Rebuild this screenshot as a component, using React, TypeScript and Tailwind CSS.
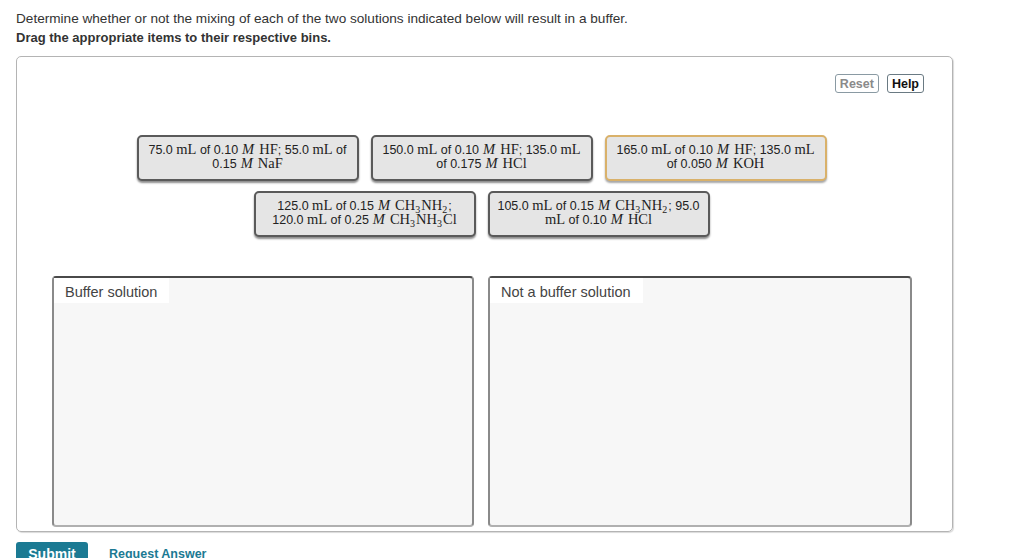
import React from "react";

const sans = { fontFamily: '"Liberation Sans", Arial, sans-serif' };
const serif = { fontFamily: '"Liberation Serif", "Times New Roman", serif' };

// upright math roman (units, formulas)
function S({ children }: { children: React.ReactNode }) {
  return <span style={serif} className="text-[14.5px]">{children}</span>;
}
// italic molarity symbol with math spacing on each side
function M() {
  return (
    <span style={serif} className="italic text-[14.5px] ml-[4px] mr-[5px]">
      M
    </span>
  );
}
function Sub({ n }: { n: string }) {
  return (
    <span className="text-[10px] leading-none relative top-[3px] mr-[1px]">{n}</span>
  );
}

type CardProps = { children: React.ReactNode; active?: boolean };
function Card({ children, active }: CardProps) {
  return (
    <div
      style={sans}
      className={
        "w-[222px] h-[46px] rounded-[5px] bg-[#e5e5e5] flex flex-col items-center justify-center pb-[2px] text-center text-[12.5px] leading-[13px] text-[#222] whitespace-nowrap " +
        (active
          ? "border-2 border-[#d9b16a] shadow-[0_2px_2px_rgba(0,0,0,0.35)]"
          : "border-2 border-[#5a5a5a] shadow-[0_2px_2px_rgba(0,0,0,0.45)]")
      }
    >
      {children}
    </div>
  );
}

function Bin({ label, width }: { label: string; width: string }) {
  return (
    <div
      className={
        width +
        " h-[251px] rounded-[4px] border-2 border-t-[#4a4a4a] border-x-[#8a8a8a] border-b-[#b0b0b0] bg-[#f7f7f7]"
      }
    >
      <div className="inline-block bg-white pl-[11px] pr-[12px] pt-[6px] pb-[3px] text-[14.5px] text-[#444] leading-[16px]">
        {label}
      </div>
    </div>
  );
}

export default function App() {
  return (
    <div style={sans} className="w-[1024px] h-[558px] overflow-hidden bg-white text-[#333]">
      <div className="pl-[16px] pt-[11px]">
        <p className="text-[13.6px] leading-[15px] text-[#333]">
          Determine whether or not the mixing of each of the two solutions indicated below will result in a buffer.
        </p>
        <p className="mt-[4px] text-[13px] leading-[15px] font-bold text-[#333]">
          Drag the appropriate items to their respective bins.
        </p>
      </div>

      <div className="ml-[16px] mt-[11px] w-[937px] h-[476px] rounded-[5px] border border-[#b4b4b4] shadow-[1px_1px_1px_rgba(0,0,0,0.15)]">
        <div className="flex justify-end gap-[8px] pr-[28px] pt-[17px]">
          <button className="h-[19px] px-[4px] rounded-[3px] border border-[#8a9aa3] bg-white text-[12.5px] font-bold text-[#8a8a8a] leading-[16px]">
            Reset
          </button>
          <button className="h-[19px] px-[4px] rounded-[3px] border border-[#6a7a83] bg-white text-[12.5px] font-bold text-[#111] leading-[16px]">
            Help
          </button>
        </div>

        <div className="mt-[42px] flex justify-center gap-[12px] pr-[6px]">
          <Card>
            <div>
              75.0 <S>mL</S> of 0.10<M /><S>HF</S>; 55.0 <S>mL</S> of
            </div>
            <div>
              0.15<M /><S>NaF</S>
            </div>
          </Card>
          <Card>
            <div>
              150.0 <S>mL</S> of 0.10<M /><S>HF</S>; 135.0 <S>mL</S>
            </div>
            <div>
              of 0.175<M /><S>HCl</S>
            </div>
          </Card>
          <Card active>
            <div>
              165.0 <S>mL</S> of 0.10<M /><S>HF</S>; 135.0 <S>mL</S>
            </div>
            <div>
              of 0.050<M /><S>KOH</S>
            </div>
          </Card>
        </div>

        <div className="mt-[10px] flex justify-center gap-[12px] pr-[6px]">
          <Card>
            <div>
              125.0 <S>mL</S> of 0.15<M />
              <S>
                CH<Sub n="3" />NH<Sub n="2" />
              </S>
              ;
            </div>
            <div>
              120.0 <S>mL</S> of 0.25<M />
              <S>
                CH<Sub n="3" />NH<Sub n="3" />Cl
              </S>
            </div>
          </Card>
          <Card>
            <div>
              105.0 <S>mL</S> of 0.15<M />
              <S>
                CH<Sub n="3" />NH<Sub n="2" />
              </S>
              ; 95.0
            </div>
            <div>
              <S>mL</S> of 0.10<M /><S>HCl</S>
            </div>
          </Card>
        </div>

        <div className="mt-[39px] flex gap-[14px] pl-[35px]">
          <Bin label="Buffer solution" width="w-[422px]" />
          <Bin label="Not a buffer solution" width="w-[424px]" />
        </div>
      </div>

      <div className="ml-[16px] mt-[10px] flex items-start gap-[21px]">
        <button className="w-[72px] h-[24px] rounded-t-[3px] bg-[#1b7a93] text-white text-[14px] font-bold leading-[24px]">
          Submit
        </button>
        <button className="mt-[5px] text-[12.5px] font-bold text-[#1b7a93] leading-[15px]">
          Request Answer
        </button>
      </div>
    </div>
  );
}
